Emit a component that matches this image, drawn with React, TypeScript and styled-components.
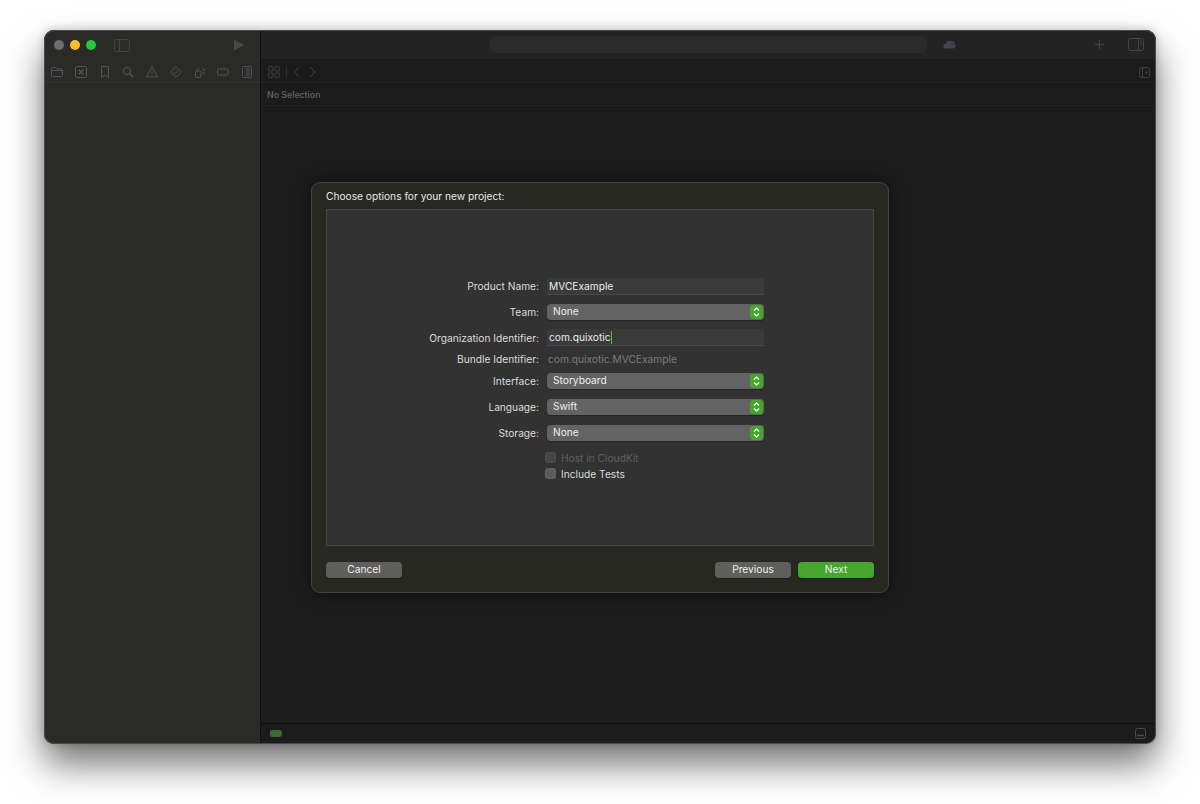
import React from 'react';
import styled, { createGlobalStyle } from 'styled-components';

const GlobalStyle = createGlobalStyle`
  html, body {
    margin: 0;
    padding: 0;
    background: #fff;
    font-family: Inter, "Liberation Sans", sans-serif;
    -webkit-font-smoothing: antialiased;
  }
`;

const Page = styled.div`
  box-sizing: border-box;
  width: 1200px;
  height: 804px;
  padding: 30px 44px 60px;
  overflow: hidden;
  background: #fff;
`;

const Window = styled.div`
  position: relative;
  display: flex;
  height: 714px;
  border-radius: 10px;
  overflow: hidden;
  background: #1b1b1b;
`;

const WindowEdge = styled.div`
  position: absolute;
  inset: 0;
  border-radius: 10px;
  box-shadow: inset 0 0 0 1px #4a4a4a;
  pointer-events: none;
`;

const WindowShadow = styled.div`
  position: absolute;
  left: 44px;
  top: 30px;
  width: 1112px;
  height: 714px;
  border-radius: 10px;
  box-shadow: 0 20px 36px rgba(0, 0, 0, 0.55), 0 0 10px rgba(0, 0, 0, 0.2);
`;

const Sidebar = styled.aside`
  flex: none;
  width: 216px;
  display: flex;
  flex-direction: column;
  background: #2a2a29;
  border-right: 1px solid #111;
`;

const SidebarBar = styled.div`
  height: 30px;
  display: flex;
  align-items: center;
  padding: 0 10px;
  flex: none;
`;

const Lights = styled.div`
  display: flex;
  gap: 6px;
  margin-right: 18px;
`;

const Light = styled.span<{ $color: string }>`
  width: 10px;
  height: 10px;
  border-radius: 50%;
  background: ${(p) => p.$color};
`;

const Spacer = styled.div`
  flex: 1;
`;

const PlaySlot = styled.span`
  width: 5px;
`;

const NavStrip = styled.div`
  height: 23px;
  box-sizing: border-box;
  display: flex;
  align-items: center;
  justify-content: space-between;
  padding: 2px 6px 0;
  border-bottom: 1px solid #333332;
  flex: none;
`;

const Main = styled.main`
  flex: 1;
  min-width: 0;
  display: flex;
  flex-direction: column;
`;

const MainToolbar = styled.div`
  height: 30px;
  flex: none;
  display: flex;
  align-items: center;
  padding: 0 12px 0 229px;
  background: #232323;
  border-bottom: 1px solid #1a1a1a;
  box-sizing: border-box;
`;

const ActivityField = styled.div`
  width: 437px;
  height: 17px;
  border-radius: 5px;
  background: #2a2a2a;
  margin-right: 16px;
`;

const JumpRow = styled.div`
  height: 23px;
  box-sizing: border-box;
  flex: none;
  display: flex;
  align-items: center;
  gap: 6px;
  padding: 2px 6px 0 7px;
  border-bottom: 1px solid #222;
`;

const RowDivider = styled.span`
  width: 1px;
  height: 12px;
  background: #2c2c2c;
`;

const SelectionBar = styled.div`
  height: 23px;
  flex: none;
  display: flex;
  align-items: center;
  padding-left: 6px;
  box-sizing: border-box;
  border-bottom: 1px solid #222;
  color: #666;
  font-size: 8.8px;
  font-weight: 500;
`;

const Editor = styled.div`
  flex: 1;
`;

const StatusBar = styled.div`
  height: 21px;
  flex: none;
  display: flex;
  align-items: center;
  justify-content: space-between;
  box-sizing: border-box;
  padding: 0 10px 1px 9px;
  border-top: 1px solid #0e0e0e;
`;

const StatusPill = styled.span`
  width: 12px;
  height: 7px;
  border-radius: 2px 3px 3px 2px;
  background: #3c6b2f;
`;

const Overlay = styled.div`
  position: absolute;
  inset: 0;
  display: flex;
  align-items: center;
  justify-content: center;
`;

const Dialog = styled.section`
  box-sizing: border-box;
  width: 578px;
  height: 411px;
  padding: 0 14px;
  display: flex;
  flex-direction: column;
  background: #272822;
  border: 1px solid #45463f;
  border-radius: 9px;
  box-shadow: 0 0 16px rgba(0, 0, 0, 0.5);
`;

const DialogTitle = styled.h2`
  margin: 0;
  height: 26px;
  flex: none;
  display: flex;
  align-items: center;
  padding-top: 1px;
  box-sizing: border-box;
  color: #e8e8e6;
  font-size: 10.2px;
  font-weight: 400;
`;

const Panel = styled.div`
  box-sizing: border-box;
  height: 337px;
  flex: none;
  padding-top: 68px;
  background: #323232;
  border: 1px solid #484946;
`;

const Form = styled.div`
  display: grid;
  grid-template-columns: 212px 217px;
  column-gap: 8px;
  align-items: center;
`;

const Label = styled.label<{ $gap: number }>`
  text-align: right;
  color: #dcdcdc;
  font-size: 10.2px;
  font-weight: 400;
  margin-top: ${(p) => p.$gap}px;
`;

const Field = styled.div<{ $gap: number }>`
  box-sizing: border-box;
  height: 17px;
  margin-top: ${(p) => p.$gap}px;
  display: flex;
  align-items: center;
  padding: 1px 0 0 2px;
  background: #3a3a3a;
  border-bottom: 1px solid #484848;
  color: #ececec;
  font-size: 10.2px;
  font-weight: 400;
`;

const Caret = styled.span`
  width: 1px;
  height: 13px;
  background: #3fd01f;
`;

const Derived = styled.div<{ $gap: number }>`
  margin-top: ${(p) => p.$gap}px;
  padding-left: 1px;
  color: #7c7c7c;
  font-size: 10.2px;
  font-weight: 400;
`;

const Popup = styled.div<{ $gap: number }>`
  box-sizing: border-box;
  height: 16px;
  margin-top: ${(p) => p.$gap}px;
  display: flex;
  align-items: center;
  justify-content: space-between;
  padding: 0 1px 1px 6px;
  background: #636363;
  border-radius: 4px;
  box-shadow: 0 1px 1px rgba(0, 0, 0, 0.3);
  color: #f0f0f0;
  font-size: 10.2px;
  font-weight: 400;
`;

const PopupArrows = styled.span`
  width: 13px;
  height: 14px;
  margin-top: 1px;
  border-radius: 3px;
  background: #45a52d;
  display: flex;
  align-items: center;
  justify-content: center;
`;

const CheckRow = styled.div<{ $gap: number; $disabled?: boolean }>`
  grid-column: 2;
  margin-top: ${(p) => p.$gap}px;
  margin-left: -2px;
  display: flex;
  align-items: center;
  gap: 5px;
  color: ${(p) => (p.$disabled ? '#5f5f5f' : '#dcdcdc')};
  font-size: 10.2px;
  font-weight: 400;
`;

const CheckBox = styled.span<{ $disabled?: boolean }>`
  width: 11px;
  height: 11px;
  border-radius: 3px;
  background: ${(p) => (p.$disabled ? '#464646' : '#5c5c5c')};
  box-shadow: inset 0 0 0 1px rgba(255, 255, 255, 0.04);
`;

const Footer = styled.div`
  flex: 1;
  display: flex;
  align-items: center;
  gap: 7px;
  padding-top: 2px;
`;

const Button = styled.button<{ $primary?: boolean }>`
  width: 76px;
  height: 16px;
  padding: 0 0 1px;
  border: 0;
  border-radius: 4px;
  background: ${(p) => (p.$primary ? '#45a52d' : '#5f5f5c')};
  box-shadow: 0 1px 1px rgba(0, 0, 0, 0.3);
  color: #f0f0f0;
  font-family: inherit;
  font-size: 10.2px;
  font-weight: 400;
`;

const Icon = styled.svg`
  display: block;
  flex: none;
  fill: none;
  stroke: ${(p) => p.color || '#525252'};
  stroke-width: 1;
`;

const ToolbarPlus = styled(Icon)`
  margin-right: 23px;
`;

const NextChevron = styled(Icon)`
  margin-left: 3px;
`;

const navIcons: React.ReactNode[] = [
  <><path d="M1.5 3.5a1 1 0 0 1 1-1h3l1 1.5h5a1 1 0 0 1 1 1v5.5a1 1 0 0 1-1 1h-9a1 1 0 0 1-1-1z" /><path d="M1.5 5.5h11" /></>,
  <><rect x="1.5" y="1.5" width="11" height="11" rx="1.5" /><path d="M4.7 4.7l4.6 4.6M9.3 4.7l-4.6 4.6" strokeWidth="1.4" /></>,
  <path d="M3.5 1.5h7v11L7 9.8l-3.5 2.7z" />,
  <><circle cx="6" cy="6" r="3.6" /><path d="M8.7 8.7l3.6 3.6" strokeWidth="1.4" /></>,
  <><path d="M7 1.8l5.6 10H1.4z" /><path d="M7 5.2v3.6M7 9.8v1" /></>,
  <><path d="M7 1.6L12.4 7 7 12.4 1.6 7z" /><path d="M5 7.2l1.5 1.4L9 5.6" /></>,
  <><rect x="2.5" y="6" width="5.5" height="6.5" rx="1.5" /><path d="M4 6V4.6a1.3 1.3 0 0 1 2.5-.4" /><path d="M9.5 2.5l1 .7M9.5 5l3-.5M9.5 7.5l2.5 1" /></>,
  <path d="M2.5 4h8l2 1.5v3L10.5 10h-8a1 1 0 0 1-1-1V5a1 1 0 0 1 1-1z" />,
  <><rect x="2.5" y="1.5" width="9" height="11" rx="1.2" /><path d="M6 4h3.5M6 6h3.5M6 8h3.5M6 10h3.5" /></>,
];

function UpDownArrows(): React.ReactElement {
  return (
    <svg width="7" height="10" viewBox="0 0 7 10" fill="none" stroke="#fff" strokeWidth="1.2">
      <path d="M1 3.5L3.5 1 6 3.5M1 6.5L3.5 9 6 6.5" />
    </svg>
  );
}

function FormRows(): React.ReactElement {
  return (
    <Form>
      <Label $gap={0}>Product Name:</Label>
      <Field $gap={0}>MVCExample</Field>
      <Label $gap={10}>Team:</Label>
      <Popup $gap={9}>
        None
        <PopupArrows><UpDownArrows /></PopupArrows>
      </Popup>
      <Label $gap={10}>Organization Identifier:</Label>
      <Field $gap={9}>
        com.quixotic
        <Caret />
      </Field>
      <Label $gap={7}>Bundle Identifier:</Label>
      <Derived $gap={7}>com.quixotic.MVCExample</Derived>
      <Label $gap={8}>Interface:</Label>
      <Popup $gap={8}>
        Storyboard
        <PopupArrows><UpDownArrows /></PopupArrows>
      </Popup>
      <Label $gap={10}>Language:</Label>
      <Popup $gap={10}>
        Swift
        <PopupArrows><UpDownArrows /></PopupArrows>
      </Popup>
      <Label $gap={10}>Storage:</Label>
      <Popup $gap={10}>
        None
        <PopupArrows><UpDownArrows /></PopupArrows>
      </Popup>
      <CheckRow $gap={11} $disabled>
        <CheckBox $disabled />
        Host in CloudKit
      </CheckRow>
      <CheckRow $gap={4}>
        <CheckBox />
        Include Tests
      </CheckRow>
    </Form>
  );
}

export default function App(): React.ReactElement {
  return (
    <Page>
      <GlobalStyle />
      <WindowShadow />
      <Window>
        <Sidebar>
          <SidebarBar>
            <Lights>
              <Light $color="#6e6e6e" />
              <Light $color="#febc2e" />
              <Light $color="#28c840" />
            </Lights>
            <Icon width="16" height="13" viewBox="0 0 16 13" color="#444">
              <rect x="0.5" y="0.5" width="15" height="12" rx="2" />
              <path d="M5.5 0.5v12" />
            </Icon>
            <Spacer />
            <svg width="12" height="12" viewBox="0 0 12 12">
              <path d="M1 0.5L11.5 6 1 11.5z" fill="#474747" />
            </svg>
            <PlaySlot />
          </SidebarBar>
          <NavStrip>
            {navIcons.map((icon, i) => (
              <Icon key={i} width="14" height="14" viewBox="0 0 14 14">
                {icon}
              </Icon>
            ))}
          </NavStrip>
        </Sidebar>
        <Main>
          <MainToolbar>
            <ActivityField />
            <svg width="13" height="9" viewBox="0 0 13 9">
              <path d="M3 8.5a2.5 2.5 0 0 1-.4-5A4 4 0 0 1 10 3a2.8 2.8 0 0 1 .5 5.5z" fill="#444" />
              <circle cx="10" cy="3" r="2" fill="#25406e" />
            </svg>
            <Spacer />
            <ToolbarPlus width="11" height="11" viewBox="0 0 11 11" color="#3f3f3f">
              <path d="M5.5 0.5v10M0.5 5.5h10" strokeWidth="1.3" />
            </ToolbarPlus>
            <Icon width="16" height="13" viewBox="0 0 16 13" color="#444">
              <rect x="0.5" y="0.5" width="15" height="12" rx="2" />
              <path d="M10.5 0.5v12M12.5 3h1.5M12.5 5h1.5M12.5 7h1.5" />
            </Icon>
          </MainToolbar>
          <JumpRow>
            <Icon width="12" height="12" viewBox="0 0 12 12" color="#3f3f3f">
              <rect x="0.5" y="0.5" width="4.5" height="4.5" rx="1" />
              <rect x="7" y="0.5" width="4.5" height="4.5" rx="1" />
              <rect x="0.5" y="7" width="4.5" height="4.5" rx="1" />
              <rect x="7" y="7" width="4.5" height="4.5" rx="1" />
            </Icon>
            <RowDivider />
            <Icon width="7" height="12" viewBox="0 0 7 12" color="#3f3f3f">
              <path d="M6 1L1 6l5 5" />
            </Icon>
            <NextChevron width="7" height="12" viewBox="0 0 7 12" color="#3f3f3f">
              <path d="M1 1l5 5-5 5" />
            </NextChevron>
            <Spacer />
            <Icon width="11" height="11" viewBox="0 0 11 11" color="#3f3f3f">
              <rect x="0.5" y="0.5" width="10" height="10" rx="2" />
              <path d="M3.5 0.5v10M6 5.5h2.5M7.2 4.2v2.6" />
            </Icon>
          </JumpRow>
          <SelectionBar>No Selection</SelectionBar>
          <Editor />
          <StatusBar>
            <StatusPill />
            <Icon width="11" height="11" viewBox="0 0 11 11" color="#4a4a4a">
              <rect x="0.5" y="0.5" width="10" height="10" rx="2" />
              <path d="M2 7.5h7" strokeWidth="1.4" />
            </Icon>
          </StatusBar>
        </Main>
        <Overlay>
          <Dialog>
            <DialogTitle>Choose options for your new project:</DialogTitle>
            <Panel>
              <FormRows />
            </Panel>
            <Footer>
              <Button>Cancel</Button>
              <Spacer />
              <Button>Previous</Button>
              <Button $primary>Next</Button>
            </Footer>
          </Dialog>
        </Overlay>
        <WindowEdge />
      </Window>
    </Page>
  );
}
